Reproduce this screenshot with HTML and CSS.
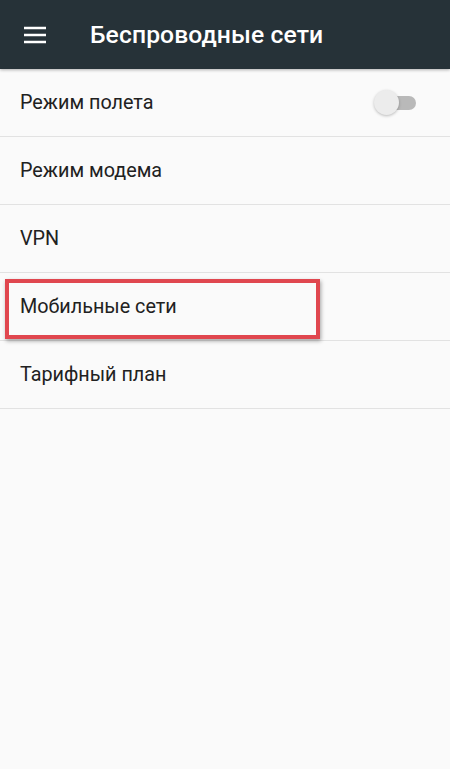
FILE: index.html
```
<!DOCTYPE html>
<html lang="ru">
<head>
<meta charset="utf-8">
<link rel="stylesheet" href="styles.css">
</head>
<body>
<header class="appbar">
  <svg class="menu" width="24" height="24" viewBox="0 0 24 24"><path d="M1 5h22M1 12h22M1 19h22" stroke="#fff" stroke-width="2.4" fill="none"/></svg>
  <h1 class="title">Беспроводные сети</h1>
</header>
<main class="list">
  <div class="row">
    <span class="label">Режим полета</span>
    <span class="switch"><span class="track"></span><span class="thumb"></span></span>
  </div>
  <div class="row"><span class="label">Режим модема</span></div>
  <div class="row"><span class="label">VPN</span></div>
  <div class="row highlighted"><span class="label">Мобильные сети</span><span class="mark"></span></div>
  <div class="row"><span class="label">Тарифный план</span></div>
</main>
</body>
</html>
```
FILE: styles.css
```
html, body {
  margin: 0;
  padding: 0;
  background: #fafafa;
  font-family: Roboto, "Noto Sans", sans-serif;
}
body {
  width: 450px;
  height: 769px;
  overflow: hidden;
}
.appbar {
  height: 69px;
  background: #263238;
  display: flex;
  align-items: center;
  box-shadow: 0 1px 3px rgba(0,0,0,0.3);
  position: relative;
  z-index: 1;
}
.menu {
  margin-left: 23px;
  margin-top: 1px;
}
.title {
  margin: 0 0 0 43px;
  color: #fff;
  font-size: 24.7px;
  font-weight: 500;
  letter-spacing: 0.1px;
}
.list {
  display: flex;
  flex-direction: column;
}
.row {
  height: 67px;
  border-bottom: 1px solid #e2e2e2;
  display: flex;
  align-items: center;
  justify-content: space-between;
  padding: 0 34px 0 20px;
  position: relative;
}
.label {
  font-size: 19.8px;
  color: #212121;
}
.switch {
  position: relative;
  width: 42px;
  height: 26px;
  display: flex;
  align-items: center;
}
.track {
  display: block;
  margin-left: 6px;
  width: 36px;
  height: 14px;
  border-radius: 7px;
  background: #b9b9b9;
}
.thumb {
  position: absolute;
  left: 0;
  top: 0;
  width: 25px;
  height: 25px;
  border-radius: 50%;
  background: #ececec;
  box-shadow: 0 1px 3px rgba(0,0,0,0.25);
}
.mark {
  position: absolute;
  left: 5px;
  top: 6px;
  width: 307px;
  height: 52px;
  border: 4px solid #e0474f;
  box-shadow: 1px 2px 4px rgba(0,0,0,0.35);
}
```
